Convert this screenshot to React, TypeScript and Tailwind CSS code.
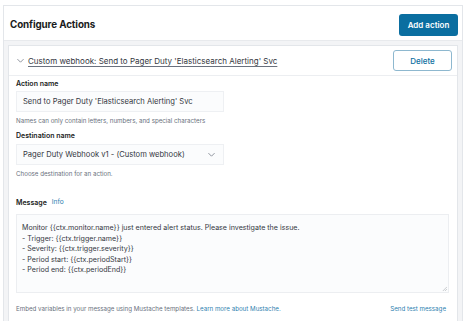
import React from "react";

const Chevron = ({ className = "" }: { className?: string }) => (
  <svg viewBox="0 0 16 16" className={className} fill="none" stroke="currentColor" strokeWidth="1.3">
    <path d="M3 6l5 5 5-5" strokeLinecap="round" strokeLinejoin="round" />
  </svg>
);

export default function App() {
  return (
    <div
      className="w-[474px] h-[321px] overflow-hidden bg-white pt-[5px] pl-[3px] pr-[11px]"
      style={{ fontFamily: "Inter, 'Noto Sans', sans-serif" }}
    >
      <div className="border border-[#e3e6ea] h-[330px] flex flex-col">
        {/* header */}
        <div className="h-[35px] flex items-center justify-between pt-[4px] pl-[6px] pr-[4px] border-b border-[#e8eaed] bg-white">
          <div className="text-[9.8px] font-bold text-[#1a1c21] tracking-[-0.1px]">Configure Actions</div>
          <button className="h-[22px] w-[59px] rounded-[3px] bg-[#0b6ea0] text-white text-[8px] font-semibold">
            Add action
          </button>
        </div>
        {/* body */}
        <div className="flex-1 bg-[#f3f4f6] px-[4px] pt-[4px]">
          <div className="bg-white border border-[#e3e6ea] h-full">
            <div className="h-[30px] flex items-center justify-between pl-[7px] pr-[5px] border-b border-[#eceef1]">
              <div className="flex items-center gap-[3px]">
                <Chevron className="w-[9px] h-[9px] text-[#69707d]" />
                <span className="text-[8px] text-[#343741] underline underline-offset-[1.5px] decoration-[#69707d]">
                  Custom webhook: Send to Pager Duty 'Elasticsearch Alerting' Svc
                </span>
              </div>
              <button className="h-[21px] w-[59px] rounded-[3px] border border-[#8eb8cf] text-[#0b6ea0] text-[8px] font-medium bg-white">
                Delete
              </button>
            </div>
            <div className="pl-[7px] pr-[7px]">
              <div className="mt-[3px] h-[11px] flex items-center text-[7px] font-semibold text-[#1a1c21]">Action name</div>
              <div className="mt-[1px] w-[208px] h-[21px] bg-[#fbfcfd] border border-[#eef0f3] flex items-center pl-[6px] text-[7.6px] text-[#343741]">
                Send to Pager Duty 'Elasticsearch Alerting' Svc
              </div>
              <div className="mt-[3px] h-[12px] flex items-center text-[6.2px] text-[#69707d]">
                Names can only contain letters, numbers, and special characters
              </div>
              <div className="mt-[3px] h-[12px] flex items-center text-[7px] font-semibold text-[#1a1c21]">Destination name</div>
              <div className="mt-[2px] w-[208px] h-[21px] bg-[#fbfcfd] border border-[#eef0f3] flex items-center justify-between pl-[6px] pr-[7px] text-[7.6px] text-[#343741]">
                <span>Pager Duty Webhook v1 - (Custom webhook)</span>
                <Chevron className="w-[9px] h-[9px] text-[#69707d]" />
              </div>
              <div className="mt-[3px] h-[12px] flex items-center text-[6.2px] text-[#69707d]">
                Choose destination for an action.
              </div>
              <div className="mt-[17px] h-[12px] flex items-center gap-[5px] text-[7px]">
                <span className="font-semibold text-[#1a1c21]">Message</span>
                <span className="text-[#2f7fb0] text-[6.6px]">Info</span>
              </div>
              <div className="relative mt-[5px] w-[433px] h-[79px] bg-[#fbfcfd] border border-[#eceef1] pl-[5px] pt-[8px] text-[7.1px] leading-[10.5px] text-[#343741]">
                <div>Monitor {"{{ctx.monitor.name}}"} just entered alert status. Please investigate the issue.</div>
                <div>- Trigger: {"{{ctx.trigger.name}}"}</div>
                <div>- Severity: {"{{ctx.trigger.severity}}"}</div>
                <div>- Period start: {"{{ctx.periodStart}}"}</div>
                <div>- Period end: {"{{ctx.periodEnd}}"}</div>
                <svg className="absolute right-[1px] bottom-[1px] w-[5px] h-[5px]" viewBox="0 0 6 6" stroke="#b0b4ba" strokeWidth="0.8">
                  <path d="M1 6L6 1M3.5 6L6 3.5" />
                </svg>
              </div>
              <div className="mt-[10px] w-[430px] h-[12px] flex items-center justify-between text-[6.2px]">
                <span className="text-[#69707d]">
                  Embed variables in your message using Mustache templates.{" "}
                  <span className="text-[#2f7fb0]">Learn more about Mustache.</span>
                </span>
                <span className="text-[#2f7fb0]">Send test message</span>
              </div>
            </div>
          </div>
        </div>
      </div>
    </div>
  );
}
